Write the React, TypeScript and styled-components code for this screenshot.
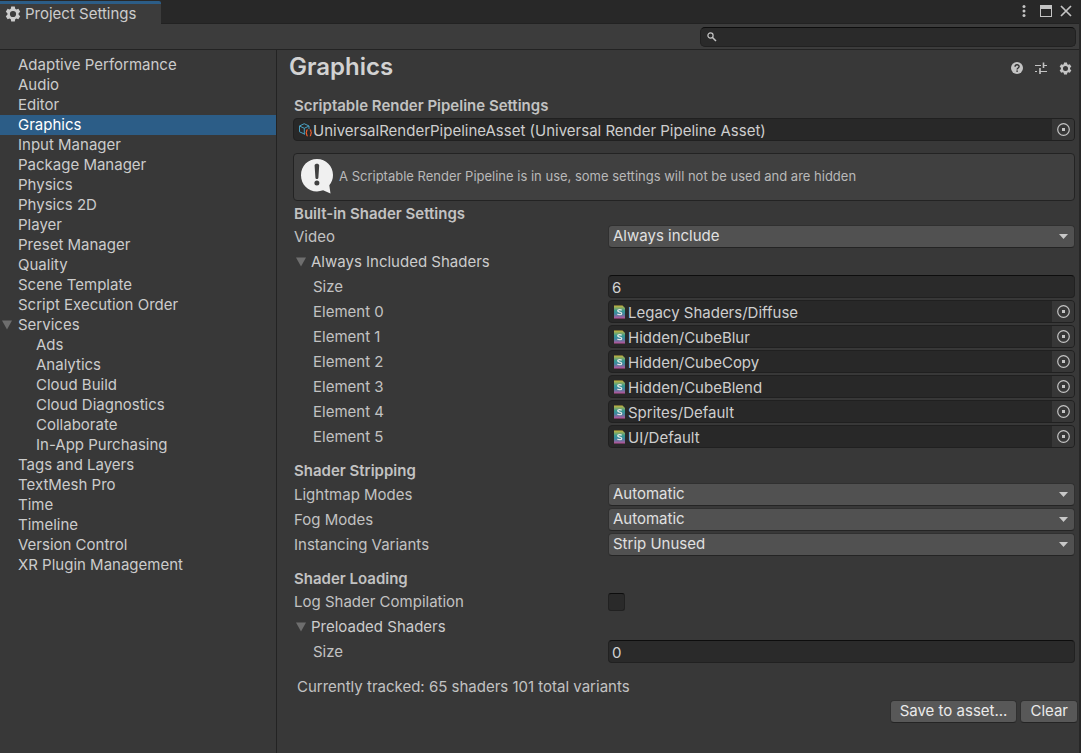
import React from "react";
import styled, { createGlobalStyle, css } from "styled-components";

const GlobalStyle = createGlobalStyle`
  *, *::before, *::after { box-sizing: border-box; }
  body { margin: 0; background: #383838; }
  button, input, select { font: inherit; letter-spacing: inherit; }
  h1, h2, p, ul { margin: 0; padding: 0; }
`;

const Window = styled.div`
  display: flex;
  flex-direction: column;
  min-height: 100vh;
  border-right: 2px solid #272727;
  background: #383838;
  color: #c2c2c2;
  font: 15px/20px Inter, "Liberation Sans", sans-serif;
`;

const TitleBar = styled.header`
  display: flex;
  justify-content: space-between;
  height: 24px;
  background: #282828;
  box-shadow: inset 0 -1px #222222;
`;

const Tab = styled.div`
  display: flex;
  align-items: center;
  gap: 4px;
  margin-top: 1px;
  padding: 0 25px 0 5px;
  border-top: 3px solid #2c5d87;
  border-top-right-radius: 2px;
  background: #3c3c3c;
  color: #cccccc;
`;

const IconButton = styled.button`
  display: flex;
  padding: 0;
  border: 0;
  background: none;
  color: #c4c4c4;
`;

const WindowControls = styled.div`
  display: flex;
  align-items: center;
  gap: 8px;
  padding: 0 7px 2px 0;
`;

const Toolbar = styled.div`
  display: flex;
  justify-content: flex-end;
  height: 26px;
  padding: 3px 3px 0;
  border-bottom: 1px solid #232323;
  background: #3c3c3c;
`;

const inset = css`
  border: 1px solid #212121;
  border-top-color: #0d0d0d;
  border-radius: 4px;
  background: #2a2a2a;
  color: #d2d2d2;
`;

const SearchBox = styled.label`
  ${inset}
  display: flex;
  align-items: center;
  gap: 4px;
  width: 35%;
  height: 20px;
  padding: 0 6px;
  border-radius: 5px;
  color: #c4c4c4;
`;

const SearchInput = styled.input`
  flex: 1;
  min-width: 0;
  padding: 0;
  border: 0;
  outline: 0;
  background: none;
  color: #d2d2d2;
`;

const Body = styled.div`
  display: flex;
  flex: 1;
`;

const Sidebar = styled.nav`
  flex: none;
  width: 277px;
  padding-top: 5px;
  border-right: 1px solid #232323;
`;

const NavList = styled.ul`
  list-style: none;
`;

const NavLink = styled.a<{ $nested?: boolean; $active?: boolean }>`
  display: flex;
  align-items: center;
  height: 20px;
  padding-left: ${(p) => (p.$nested ? 36 : 18)}px;
  background: ${(p) => (p.$active ? "#2c5d87" : "none")};
  color: ${(p) => (p.$active ? "#ffffff" : "#cccccc")};
  text-decoration: none;
`;

const NavFold = styled.span`
  display: flex;
  width: 16px;
  margin-left: -16px;
`;

const Main = styled.main`
  flex: 1;
  min-width: 0;
  padding: 0 4px 20px 16px;
`;

const PageHeader = styled.div`
  display: flex;
  align-items: center;
  justify-content: space-between;
  height: 34px;
  padding: 0 3px 0 0;
  margin: 0 0 11px -4px;
`;

const PageTitle = styled.h1`
  color: #d2d2d2;
  font-size: 24px;
  font-weight: 600;
  line-height: 34px;
`;

const HeaderTools = styled.div`
  display: flex;
  gap: 12px;
  padding-top: 2px;
`;

const Section = styled.section<{ $gap?: number }>`
  display: flex;
  flex-direction: column;
  gap: 2px;
  margin-top: ${(p) => p.$gap ?? 0}px;
`;

const SectionTitle = styled.h2<{ $tight?: boolean }>`
  height: ${(p) => (p.$tight ? 20 : 21)}px;
  padding-left: 1px;
  font-size: 15px;
  font-weight: 600;
  line-height: 22px;
`;

const HelpBox = styled.div`
  display: flex;
  align-items: center;
  gap: 5px;
  height: 48px;
  margin-top: 12px;
  padding: 0 6px 2px;
  border: 1px solid #232323;
  border-radius: 4px;
  background: #404040;
  color: #b9b9b9;
  font-size: 13px;
`;

const Row = styled.div`
  display: grid;
  grid-template-columns: 315px 1fr;
  align-items: center;
  height: 23px;
`;

const Label = styled.label<{ $nested?: boolean }>`
  padding-left: ${(p) => (p.$nested ? 20 : 1)}px;
  line-height: 23px;
`;

const Foldout = styled.button`
  display: flex;
  align-items: center;
  gap: 4px;
  height: 23px;
  padding: 0 0 0 3px;
  border: 0;
  background: none;
  color: #cccccc;
`;

const NumberInput = styled.input`
  ${inset}
  width: 100%;
  height: 23px;
  padding: 2px 3px 0;
`;

const SelectBox = styled.div`
  display: grid;
  align-items: center;

  > * {
    grid-area: 1 / 1;
  }

  > svg {
    justify-self: end;
    margin: 0 7px 1px 0;
    pointer-events: none;
  }
`;

const Select = styled.select`
  appearance: none;
  width: 100%;
  height: 23px;
  padding: 0 4px 1px;
  border: 1px solid #303030;
  border-bottom-color: #242424;
  border-radius: 4px;
  background: #515151;
  color: #e0e0e0;
`;

const ObjectBox = styled.div`
  display: flex;
  align-items: center;
  height: 23px;
  padding-left: 5px;
  overflow: hidden;
  border: 1px solid #202020;
  border-radius: 4px;
  background: #282828;
`;

const ObjectName = styled.input`
  flex: 1;
  min-width: 0;
  padding: 2px 0 0;
  border: 0;
  outline: 0;
  background: none;
  color: #cecece;
`;

const PickButton = styled.button`
  display: flex;
  align-items: center;
  justify-content: center;
  align-self: stretch;
  width: 22px;
  padding: 0 0 1px;
  border: 0;
  background: #373737;
  color: #c4c4c4;
`;

const Checkbox = styled.input`
  ${inset}
  appearance: none;
  width: 17px;
  height: 18px;
  margin: 0;
  border-radius: 3px;
`;

const Tracked = styled.p`
  margin-top: 12px;
  padding-left: 4px;
  line-height: 23px;
`;

const Actions = styled.div`
  display: flex;
  justify-content: flex-end;
  gap: 3px;
  margin: 2px -3px 0 0;
`;

const ActionButton = styled.button`
  height: 23px;
  padding: 0 9px 1px;
  border: 1px solid #303030;
  border-bottom-color: #242424;
  border-radius: 4px;
  background: #585858;
  color: #eaeaea;
`;

const GearIcon = ({ size }: { size: number }) => (
  <svg width={size} height={size} viewBox="0 0 16 16" aria-hidden="true">
    <path
      fill="currentColor"
      fillRule="evenodd"
      d="M6.2 0.6h3.6l.4 2.1 1.2.7 2-.7 1.8 3.1-1.6 1.4v1.6l1.6 1.4-1.8 3.1-2-.7-1.2.7-.4 2.1H6.2l-.4-2.1-1.2-.7-2 .7L.8 10.200l1.600-1.400V7.200L.8 5.800l1.800-3.100 2 .7 1.200-.7zM8 4.900a3.100 3.100 0 1 0 0 6.200a3.100 3.100 0 1 0 0-6.200z"
    />
  </svg>
);

const FoldIcon = () => (
  <svg width="11" height="10" viewBox="0 0 11 10" aria-hidden="true">
    <path fill="#6e6e6e" d="M0 0.500h10L5 9.500z" />
  </svg>
);

const SearchIcon = () => (
  <svg width="10" height="10" viewBox="0 0 10 10" fill="none" stroke="currentColor" aria-hidden="true">
    <circle cx="3.500" cy="3.500" r="2.600" strokeWidth="1.200" />
    <path d="M5.500 5.500L9 9" strokeWidth="1.500" />
  </svg>
);

const KebabIcon = () => (
  <svg width="16" height="12" viewBox="0 0 16 12" fill="currentColor" aria-hidden="true">
    <circle cx="8" cy="1.500" r="1.500" />
    <circle cx="8" cy="6" r="1.500" />
    <circle cx="8" cy="10.500" r="1.500" />
  </svg>
);

const MaximizeIcon = () => (
  <svg width="12" height="12" viewBox="0 0 12 12" aria-hidden="true">
    <path fill="currentColor" fillRule="evenodd" d="M0 0h12v12H0zM1 4v7h10V4z" />
  </svg>
);

const CloseIcon = () => (
  <svg width="12" height="12" viewBox="0 0 12 12" aria-hidden="true">
    <path d="M1 1l10 10M11 1L1 11" stroke="currentColor" strokeWidth="1.700" />
  </svg>
);

const HelpIcon = () => (
  <svg width="12" height="12" viewBox="0 0 13 13" fill="none" aria-hidden="true">
    <circle cx="6.500" cy="6.500" r="6.500" fill="currentColor" />
    <path d="M4.400 5.100c0-2.900 4.400-2.700 4.400-.2 0 1.600-2.200 1.500-2.200 3.200" stroke="#303030" strokeWidth="1.500" />
    <rect x="5.800" y="9.100" width="1.600" height="1.600" fill="#303030" />
  </svg>
);

const PresetIcon = () => (
  <svg width="12" height="12" viewBox="0 0 12 12" fill="none" stroke="currentColor" aria-hidden="true">
    <path d="M0 3.500H6M8 3.500H12M0 9.500H2M4.500 9.500H12" />
    <path d="M8.500 0.500V6M5 6V12" strokeWidth="1.600" />
  </svg>
);

const TargetIcon = () => (
  <svg width="13" height="13" viewBox="0 0 13 13" aria-hidden="true">
    <circle cx="6.500" cy="6.500" r="5.800" fill="none" stroke="currentColor" strokeWidth="1.200" />
    <rect x="5" y="5" width="3" height="3" fill="currentColor" />
  </svg>
);

const ArrowIcon = () => (
  <svg width="9" height="5" viewBox="0 0 9 5" aria-hidden="true">
    <path fill="#c8c8c8" d="M0 0h9L4.500 5z" />
  </svg>
);

const AssetIcon = () => (
  <svg width="14" height="14" viewBox="0 0 14 14" fill="none" aria-hidden="true">
    <path d="M6 11.300L0.500 8.800V3L5.200.700l4.800 2.300v3M.500 3l4.800 2.300L10 3M5.300 5.300v6" stroke="#4a9fc0" />
    <path
      d="M8.700 6.800c-1.100 0-1 .4-1 1.300s0 1.500-.9 1.700c.9.200.9.900.9 1.800s0 1.400 1 1.400M10.800 6.800c1.100 0 1 .4 1 1.300s0 1.500.9 1.700c-.9.200-.9.900-.9 1.800s0 1.400-1 1.400"
      stroke="#f0602f"
      strokeWidth="1.200"
    />
  </svg>
);

const ShaderIcon = () => (
  <svg width="14" height="14" viewBox="0 0 14 14" aria-hidden="true">
    <defs>
      <linearGradient id="shader-fill" x1="0" y1="0" x2="0" y2="1">
        <stop offset="0" stopColor="#c9b53c" />
        <stop offset="0.400" stopColor="#369a92" />
        <stop offset="0.650" stopColor="#3f86a0" />
        <stop offset="1" stopColor="#c0519b" />
      </linearGradient>
    </defs>
    <path fill="url(#shader-fill)" d="M0 0.500h8.500L11 3v10.500H0z" />
    <path
      d="M7.700 5.300C7 4.300 3.700 4.200 3.700 5.800c0 1.700 4 .8 4 2.600 0 1.700-3.500 1.500-4.300.4"
      fill="none"
      stroke="#e4e4e4"
      strokeWidth="1.300"
    />
  </svg>
);

const NoticeIcon = () => (
  <svg width="34" height="36" viewBox="0 0 34 36" aria-hidden="true">
    <path
      fill="#f0f0f0"
      d="M17 1C26 1 33 8 33 17c0 4-1.300 7.500-3.700 10.300L30.500 35.500l-7.400-3.200C21 33 19 33.400 17 33.400 8 33.400 1 26.500 1 17.200S8 1 17 1z"
    />
    <path fill="#404040" d="M14.600 7.500c0-2.500 4.600-2.500 4.600 0L18.400 19.500c-.1 2-2.900 2-3 0z" />
    <circle cx="16.900" cy="25" r="2.500" fill="#404040" />
  </svg>
);

interface NavItem {
  name: string;
  children?: string[];
}

const navItems: NavItem[] = [
  { name: "Adaptive Performance" },
  { name: "Audio" },
  { name: "Editor" },
  { name: "Graphics" },
  { name: "Input Manager" },
  { name: "Package Manager" },
  { name: "Physics" },
  { name: "Physics 2D" },
  { name: "Player" },
  { name: "Preset Manager" },
  { name: "Quality" },
  { name: "Scene Template" },
  { name: "Script Execution Order" },
  {
    name: "Services",
    children: ["Ads", "Analytics", "Cloud Build", "Cloud Diagnostics", "Collaborate", "In-App Purchasing"],
  },
  { name: "Tags and Layers" },
  { name: "TextMesh Pro" },
  { name: "Time" },
  { name: "Timeline" },
  { name: "Version Control" },
  { name: "XR Plugin Management" },
];

const shaders = [
  "Legacy Shaders/Diffuse",
  "Hidden/CubeBlur",
  "Hidden/CubeCopy",
  "Hidden/CubeBlend",
  "Sprites/Default",
  "UI/Default",
];

const stripping = [
  { id: "lightmap", label: "Lightmap Modes", value: "Automatic" },
  { id: "fog", label: "Fog Modes", value: "Automatic" },
  { id: "instancing", label: "Instancing Variants", value: "Strip Unused" },
];

function SelectRow({ id, label, value }: { id: string; label: string; value: string }) {
  return (
    <Row>
      <Label htmlFor={id}>{label}</Label>
      <SelectBox>
        <Select id={id} defaultValue={value}>
          <option>{value}</option>
        </Select>
        <ArrowIcon />
      </SelectBox>
    </Row>
  );
}

function SizeRow({ id, value }: { id: string; value: string }) {
  return (
    <Row>
      <Label htmlFor={id} $nested>Size</Label>
      <NumberInput id={id} defaultValue={value} inputMode="numeric" />
    </Row>
  );
}

interface ObjectFieldProps {
  id: string;
  value: string;
  icon: React.ReactNode;
  labelledBy?: string;
}

function ObjectField({ id, value, icon, labelledBy }: ObjectFieldProps) {
  return (
    <ObjectBox>
      {icon}
      <ObjectName id={id} value={value} readOnly aria-labelledby={labelledBy} />
      <PickButton aria-label="Select object">
        <TargetIcon />
      </PickButton>
    </ObjectBox>
  );
}

export default function App() {
  return (
    <Window>
      <GlobalStyle />
      <TitleBar>
        <Tab>
          <GearIcon size={16} />
          Project Settings
        </Tab>
        <WindowControls>
          <IconButton aria-label="Menu"><KebabIcon /></IconButton>
          <IconButton aria-label="Maximize"><MaximizeIcon /></IconButton>
          <IconButton aria-label="Close"><CloseIcon /></IconButton>
        </WindowControls>
      </TitleBar>
      <Toolbar>
        <SearchBox>
          <SearchIcon />
          <SearchInput aria-label="Search" />
        </SearchBox>
      </Toolbar>
      <Body>
        <Sidebar>
          <NavList>
            {navItems.map((item) => (
              <li key={item.name}>
                <NavLink href="#" $active={item.name === "Graphics"}>
                  {item.children && <NavFold><FoldIcon /></NavFold>}
                  {item.name}
                </NavLink>
                {item.children && (
                  <NavList>
                    {item.children.map((child) => (
                      <li key={child}>
                        <NavLink href="#" $nested>{child}</NavLink>
                      </li>
                    ))}
                  </NavList>
                )}
              </li>
            ))}
          </NavList>
        </Sidebar>
        <Main>
          <PageHeader>
            <PageTitle>Graphics</PageTitle>
            <HeaderTools>
              <IconButton aria-label="Help"><HelpIcon /></IconButton>
              <IconButton aria-label="Presets"><PresetIcon /></IconButton>
              <IconButton aria-label="Options"><GearIcon size={13} /></IconButton>
            </HeaderTools>
          </PageHeader>

          <Section>
            <SectionTitle id="pipeline-title">Scriptable Render Pipeline Settings</SectionTitle>
            <ObjectField
              id="pipeline"
              labelledBy="pipeline-title"
              value="UniversalRenderPipelineAsset (Universal Render Pipeline Asset)"
              icon={<AssetIcon />}
            />
          </Section>
          <HelpBox role="note">
            <NoticeIcon />
            A Scriptable Render Pipeline is in use, some settings will not be used and are hidden
          </HelpBox>

          <Section $gap={2}>
            <SectionTitle $tight>Built-in Shader Settings</SectionTitle>
            <SelectRow id="video" label="Video" value="Always include" />
            <Foldout aria-expanded="true"><FoldIcon />Always Included Shaders</Foldout>
            <SizeRow id="included-size" value="6" />
            {shaders.map((name, i) => (
              <Row key={name}>
                <Label htmlFor={`element-${i}`} $nested>Element {i}</Label>
                <ObjectField id={`element-${i}`} value={name} icon={<ShaderIcon />} />
              </Row>
            ))}
          </Section>

          <Section $gap={12}>
            <SectionTitle>Shader Stripping</SectionTitle>
            {stripping.map((row) => (
              <SelectRow key={row.id} {...row} />
            ))}
          </Section>

          <Section $gap={12}>
            <SectionTitle $tight>Shader Loading</SectionTitle>
            <Row>
              <Label htmlFor="log">Log Shader Compilation</Label>
              <Checkbox id="log" type="checkbox" />
            </Row>
            <Foldout aria-expanded="true"><FoldIcon />Preloaded Shaders</Foldout>
            <SizeRow id="preloaded-size" value="0" />
          </Section>

          <Tracked>Currently tracked: 65 shaders 101 total variants</Tracked>
          <Actions>
            <ActionButton>Save to asset...</ActionButton>
            <ActionButton>Clear</ActionButton>
          </Actions>
        </Main>
      </Body>
    </Window>
  );
}
